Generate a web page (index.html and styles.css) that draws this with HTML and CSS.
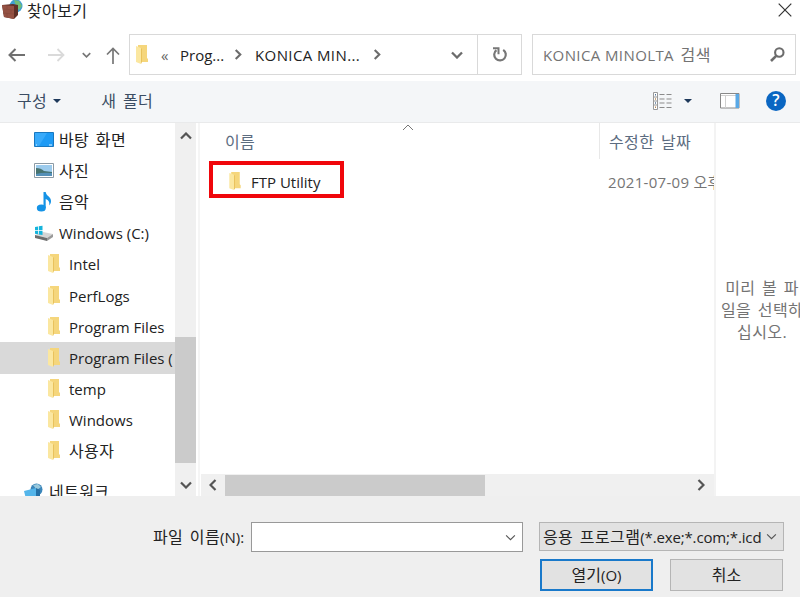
FILE: index.html
```html
<!DOCTYPE html>
<html lang="ko">
<head>
    <meta charset="UTF-8">
    <meta name="viewport" content="width=device-width, initial-scale=1.0">
    <title>찾아보기</title>
    <link rel="stylesheet" href="styles.css">
</head>
<body>

    <svg class="defs" width="0" height="0">
        <symbol id="folder" viewBox="0 0 14 20">
            <path d="M3 0h9v13l1 1v3H3z" fill="#f5d67c"/>
            <path d="M1 1l5 2v16l-5-2z" fill="#fbe7a0"/>
            <path d="M6 3l1 1v13l-1 2z" fill="#e9c25c"/>
        </symbol>
        <symbol id="chev-down" viewBox="0 0 12 8">
            <path d="M1 1.5l5 5 5-5" fill="none" stroke="currentColor"/>
        </symbol>
        <symbol id="chev-right" viewBox="0 0 8 12">
            <path d="M1.5 1l5 5-5 5" fill="none" stroke="currentColor"/>
        </symbol>
    </svg>

    <div class="dialog">
        <header class="titlebar">
            <svg class="app-icon" width="21" height="20" viewBox="0 0 21 20">
                <circle cx="14" cy="6" r="6.500" fill="#3f9fd0"/>
                <path d="M12 0l5 1 3 5-3 4-3-4z" fill="#72bd78"/>
                <path d="M0 5l11-1 5 1v10l-4 4-10-2z" fill="#5f2f26"/>
                <path d="M0 5l12 1v13L2 17z" fill="#945143"/>
                <path d="M1 9l11 1M1 13l11 1M5 6v3M9 10v3M5 13v4" stroke="#85483b" stroke-width=".6"/>
            </svg>
            <span class="title">찾아보기</span>
            <svg class="close" width="14" height="14" viewBox="0 0 14 14"><path d="M.7.7l12.6 12.6M13.3.7L.7 13.3" stroke="#333" stroke-width="1.2"/></svg>
        </header>

        <nav class="navbar">
            <svg class="back" width="17" height="14" viewBox="0 0 17 14"><path d="M7.5 1L1.5 7l6 6M1.5 7H17" fill="none" stroke="#707070" stroke-width="2"/></svg>
            <svg class="forward" width="17" height="14" viewBox="0 0 17 14"><path d="M9.5 1l6 6-6 6M15.5 7H0" fill="none" stroke="#dadada" stroke-width="1.8"/></svg>
            <svg class="recent" width="9" height="6"><use href="#chev-down"/></svg>
            <svg class="up" width="14" height="17" viewBox="0 0 14 17"><path d="M1 7.5l6-6 6 6M7 1.5V17" fill="none" stroke="#777" stroke-width="1.7"/></svg>

            <div class="address latin">
                <svg class="folder" width="14" height="20"><use href="#folder"/></svg>
                <span class="more">«</span>
                <span class="crumb">Prog...</span>
                <svg class="sep" width="8" height="11"><use href="#chev-right"/></svg>
                <span class="crumb wide">KONICA MIN...</span>
                <svg class="sep" width="8" height="11"><use href="#chev-right"/></svg>
                <svg class="history" width="12" height="8"><use href="#chev-down"/></svg>
                <div class="refresh">
                    <svg width="16" height="16" viewBox="0 0 16 16"><path d="M11.2 2.8a5.8 5.8 0 1 1-6.8.3" fill="none" stroke="#777" stroke-width="2.2"/><path d="M1 1.200h5.500v6" fill="none" stroke="#777" stroke-width="2"/></svg>
                </div>
            </div>

            <div class="search">
                <span><span class="latin spaced">KONICA MINOLTA</span> 검색</span>
                <svg width="15" height="15" viewBox="0 0 15 15"><circle cx="9.3" cy="5.5" r="4.2" fill="none" stroke="#6c6c6c" stroke-width="2.1"/><path d="M6.2 8.8L1 14" stroke="#6c6c6c" stroke-width="2.6"/></svg>
            </div>
        </nav>

        <div class="toolbar">
            <span class="organize">구성</span>
            <i class="caret"></i>
            <span class="new-folder">새 폴더</span>
            <svg class="view" width="19" height="18" viewBox="0 0 19 18">
                <path d="M.5.5h4v17h-4zM.5 5h4M.5 9h4M.5 13h4" fill="#fff" stroke="#999"/>
                <path d="M2 2.7h1M2 11h1" stroke="#557799" stroke-width="1.4"/>
                <path d="M2 7h1M2 15.2h1" stroke="#b98a55" stroke-width="1.4"/>
                <path d="M6.5 2.5h5M13.5 2.5h5M6.5 7h5M13.5 7h5M6.5 11h5M13.5 11h5M6.5 15.5h5M13.5 15.5h5" stroke="#8b8b8b"/>
            </svg>
            <i class="caret view-caret"></i>
            <svg class="preview-icon" width="20" height="16" viewBox="0 0 20 16">
                <path d="M.5.5h18.500v14.500H.5z" fill="#fff" stroke="#888"/>
                <path d="M1 2.500h18M5.500 3v12" stroke="#d0d0d0"/>
                <path d="M15.500 1h3.500v14h-3.500z" fill="#5aa9e6"/>
            </svg>
            <span class="help">?</span>
        </div>

        <main class="content">
            <aside class="tree">
                <ul class="items">
                    <li class="drive">
                        <svg width="20" height="15" viewBox="0 0 20 15"><path d="M.5.5h19v14H.5z" fill="#1e9bf5" stroke="#1878c0"/><path d="M1 1h12L5 14H1z" fill="#38aafa"/><path d="M2 13h1M15 13h3" stroke="#d9efff"/></svg>
                        바탕 화면
                    </li>
                    <li class="drive">
                        <svg width="20" height="15" viewBox="0 0 20 15"><path d="M.5.5h19v14H.5z" fill="#fff" stroke="#8c9aa5"/><path d="M2 2h16v11H2z" fill="#9ccbed"/><path d="M2 5q5 0 8 3l8 1v2H2z" fill="#47736f"/><path d="M2 11q7-2 16-1v3H2z" fill="#5590b8"/></svg>
                        사진
                    </li>
                    <li class="drive">
                        <svg width="20" height="20" viewBox="0 0 20 20"><ellipse cx="7.300" cy="16" rx="4.500" ry="3.500" fill="#1593e6"/><path d="M9.500 0h2.200c.3 4 5.300 4.500 5.300 9 0 2-.7 3.300-1.800 4.500.6-3.500-.4-5.200-3.500-6.500v9H9.500z" fill="#1593e6"/></svg>
                        음악
                    </li>
                    <li class="drive latin">
                        <svg width="20" height="17" viewBox="0 0 20 17"><path d="M1 10l8-3 10 2-6 4z" fill="#d5d5d5"/><path d="M1 10l12 3v3L1 13z" fill="#6d6d6d"/><path d="M13 13l6-4v3l-6 4z" fill="#999"/><path d="M1 2l3-.5V5H1zM4.800 1.300L8.500.8V5H4.800zM1 5.800h3v3.400l-3-.5zM4.800 5.800h3.700V10l-3.700-.6z" fill="#15b4dc"/></svg>
                        Windows (C:)
                    </li>
                    <li class="latin"><svg width="14" height="20"><use href="#folder"/></svg>Intel</li>
                    <li class="latin"><svg width="14" height="20"><use href="#folder"/></svg>PerfLogs</li>
                    <li class="latin"><svg width="14" height="20"><use href="#folder"/></svg>Program Files</li>
                    <li class="latin selected"><svg width="14" height="20"><use href="#folder"/></svg>Program Files (</li>
                    <li class="latin"><svg width="14" height="20"><use href="#folder"/></svg>temp</li>
                    <li class="latin"><svg width="14" height="20"><use href="#folder"/></svg>Windows</li>
                    <li><svg width="14" height="20"><use href="#folder"/></svg>사용자</li>
                    <li class="network">
                        <svg width="20" height="18" viewBox="0 0 20 18"><circle cx="12.500" cy="6.500" r="6" fill="#3b86ba"/><path d="M9 2l5-1 3 3-4 3z" fill="#9ac9dd"/><path d="M0 8l12-3v9L2 16z" fill="#54b5ea"/><path d="M12 5l4 2v6l-4 3z" fill="#246fa5"/></svg>
                        네트워크
                    </li>
                </ul>
                <div class="vscroll">
                    <svg class="flip" width="12" height="8"><use href="#chev-down"/></svg>
                    <div class="thumb"></div>
                    <svg width="12" height="8"><use href="#chev-down"/></svg>
                </div>
            </aside>

            <section class="files">
                <div class="columns">
                    <span class="col-name">이름</span>
                    <svg class="sort" width="12" height="7" viewBox="0 0 12 7"><path d="M1 6l5-5 5 5" fill="none" stroke="#777"/></svg>
                    <span class="col-date">수정한 날짜</span>
                </div>
                <div class="file latin">
                    <div class="file-name"><svg width="14" height="19"><use href="#folder"/></svg><span>FTP Utility</span></div>
                    <span class="file-date">2021-07-09 오후</span>
                </div>
                <div class="hscroll">
                    <svg class="flip-x" width="8" height="12"><use href="#chev-right"/></svg>
                    <div class="thumb"></div>
                    <svg class="end" width="8" height="12"><use href="#chev-right"/></svg>
                </div>
            </section>

            <section class="preview">
                <p>미리 볼 파<br>일을 선택하<br>십시오.</p>
            </section>
        </main>

        <footer class="footer">
            <div class="fields">
                <span class="label">파일 이름<span class="latin">(N):</span></span>
                <div class="combo"><svg width="11" height="7"><use href="#chev-down"/></svg></div>
                <div class="filter"><span>응용 프로그램<span class="latin types">(*.exe;*.com;*.icd</span></span><svg width="11" height="7"><use href="#chev-down"/></svg></div>
            </div>
            <div class="actions">
                <button class="btn primary">열기<span class="latin">(O)</span></button>
                <button class="btn">취소</button>
            </div>
        </footer>
    </div>

</body>
</html>
```
FILE: styles.css
```css
* {
    box-sizing: border-box;
}
body {
    margin: 0;
    font-family: "Open Sans", "Noto Sans CJK KR", sans-serif;
    font-size: 16px;
    line-height: 22px;
    letter-spacing: 0.4px;
    word-spacing: 2px;
    color: #222;
    background: #fff;
    overflow: hidden;
}
svg {
    display: block;
    flex: none;
}
.defs {
    position: absolute;
}
.latin {
    font-size: 15px;
    letter-spacing: 0;
    word-spacing: 0;
}
.spaced {
    letter-spacing: 0.4px;
}
.dialog {
    width: 800px;
    height: 597px;
    display: flex;
    flex-direction: column;
    overflow: hidden;
    white-space: nowrap;
}
.titlebar {
    height: 34px;
    display: flex;
    align-items: flex-start;
    padding: 0 8px 0 2px;
}
.title {
    margin-left: 4px;
}
.close {
    margin: 3px 0 0 auto;
}

/* navigation */
.navbar {
    height: 47px;
    display: flex;
    padding-left: 8px;
}
.back, .forward {
    margin: 14px 23px 0 0;
}
.recent {
    margin: 18px 15px 0 -7px;
    color: #777;
    stroke-width: 2.2;
}
.forward {
    margin-right: 24px;
}
.up {
    margin: 13px 9px 0 0;
}
.address {
    width: 393px;
    height: 41px;
    flex: none;
    display: flex;
    align-items: center;
    border: 1px solid #d9d9d9;
    padding-left: 5px;
}
.more {
    width: 10px;
    margin-left: 12px;
    color: #666;
}
.crumb {
    width: 44px;
    margin: 0 10px 0 9px;
}
.crumb.wide {
    width: 106px;
    margin: 0 12px 0 13px;
    letter-spacing: 0.4px;
}
.sep, .history {
    color: #6c6c6c;
    stroke-width: 2.3;
}
.history {
    margin-left: auto;
}
.refresh {
    width: 44px;
    height: 39px;
    margin-left: 14px;
    border-left: 1px solid #d9d9d9;
    display: flex;
    align-items: center;
    justify-content: center;
}
.search {
    width: 264px;
    height: 41px;
    flex: none;
    margin-left: 10px;
    padding: 0 10px;
    border: 1px solid #d9d9d9;
    display: flex;
    align-items: center;
    justify-content: space-between;
    color: #737373;
}

/* toolbar */
.toolbar {
    height: 42px;
    flex: none;
    display: flex;
    align-items: center;
    background: #f4f6f8;
    border-bottom: 1px solid #e9eaeb;
    padding: 0 14px 2px 17px;
    color: #3b4d63;
}
.caret {
    border: 4px solid transparent;
    border-top-color: #1e395b;
    border-bottom: 0;
    margin-left: 6px;
}
.new-folder {
    margin-left: 40px;
}
.view {
    margin-left: auto;
}
.view-caret {
    margin: 0 28px 0 12px;
}
.help {
    width: 20px;
    height: 20px;
    margin-left: 26px;
    border-radius: 50%;
    background: #0a66c2;
    color: #fff;
    font-weight: 600;
    line-height: 19px;
    text-align: center;
}

/* folder tree */
.content {
    height: 373px;
    flex: none;
    display: flex;
}
.tree {
    width: 201px;
    flex: none;
    display: flex;
}
.items {
    width: 175px;
    margin: 0;
    padding: 1px 0 0;
    list-style: none;
    overflow: hidden;
}
.items li {
    height: 31.2px;
    display: flex;
    align-items: center;
    padding-left: 47px;
    gap: 8px;
}
.items .drive {
    padding-left: 34px;
    gap: 5px;
}
.items .selected {
    background: #d9d9d9;
}
.items .network {
    margin-top: 9px;
    padding-left: 24px;
    gap: 5px;
}
.vscroll {
    width: 21px;
    background: #f0f0f0;
    display: flex;
    flex-direction: column;
    align-items: center;
    justify-content: space-between;
    padding: 9px 0 7px;
    color: #555;
    stroke-width: 2.2;
}
.thumb {
    background: #cbcbcb;
}
.vscroll .thumb {
    width: 21px;
    height: 126px;
    margin-top: 178px;
}
.flip {
    transform: scaleY(-1);
}
.flip-x {
    transform: scaleX(-1);
}

/* file list */
.files {
    width: 516px;
    flex: none;
    margin-left: -3px;
    border-left: 2px solid #f5f5f5;
    padding-left: 1px;
    display: flex;
    flex-direction: column;
    overflow: hidden;
}
.columns {
    height: 36px;
    display: flex;
    color: #5c6c80;
}
.col-name {
    width: 177px;
    padding: 8px 0 0 24px;
}
.sort {
    margin: 1px 0 0 24px;
}
.col-date {
    margin-left: auto;
    width: 115px;
    padding: 8px 0 0 9px;
    border-left: 1px solid #e8e8e8;
}
.file {
    display: flex;
    height: 40px;
    padding: 2px 0 0 8px;
}
.file-name {
    width: 135px;
    height: 37px;
    flex: none;
    border: 4px solid #f0060b;
    display: flex;
    padding: 7px 0 0 15px;
}
.file-name span {
    margin: -1px 0 0 9px;
}
.file-date {
    margin: 10px 0 0 264px;
    width: 106px;
    overflow: hidden;
    letter-spacing: 0.3px;
    color: #757575;
}
.hscroll {
    height: 22px;
    margin-top: auto;
    background: #f0f0f0;
    display: flex;
    align-items: center;
    padding: 0 9px 0 8px;
    color: #555;
    stroke-width: 2.2;
}
.hscroll .thumb {
    width: 260px;
    height: 21px;
    margin-left: 8px;
}
.end {
    margin-left: auto;
}
.preview {
    flex: 1;
    min-width: 0;
    border-left: 2px solid #f3f3f3;
    padding: 154px 0 0 5px;
    color: #737373;
}
.preview p {
    width: 82px;
    margin: 0;
    text-align: center;
}

/* footer */
.footer {
    height: 101px;
    flex: none;
    background: #efefef;
    padding-top: 26px;
}
.fields {
    display: flex;
    padding-left: 153px;
}
.label {
    width: 98px;
    line-height: 30px;
}
.combo, .filter {
    height: 30px;
    border: 1px solid #999;
    display: flex;
    align-items: center;
    color: #555;
    stroke-width: 1.3;
}
.combo {
    width: 272px;
    background: #fff;
    justify-content: flex-end;
    padding-right: 6px;
}
.filter {
    width: 245px;
    height: 29px;
    margin-left: 16px;
    background: #e2e2e2;
    border-color: #b5b5b5;
    justify-content: space-between;
    padding: 0 6px 0 3px;
}
.filter span {
    color: #222;
}
.types {
    letter-spacing: -0.15px;
}
.actions {
    display: flex;
    gap: 17px;
    padding: 7px 0 0 540px;
}
.btn {
    width: 113px;
    height: 32px;
    padding: 0;
    border: 1px solid #b5b5b5;
    background: #e2e2e2;
    font: inherit;
    color: #222;
}
.btn.primary {
    border: 2px solid #1979ca;
}
```
